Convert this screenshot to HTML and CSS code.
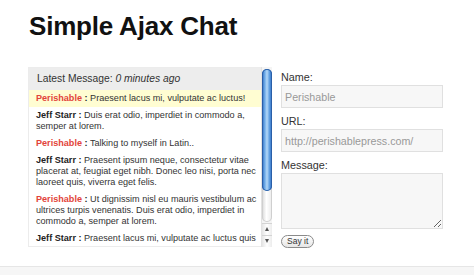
FILE: index.html
```html
<!DOCTYPE html>
<html>
<head>
<meta charset="utf-8">
<title>Simple Ajax Chat</title>
<link rel="stylesheet" href="styles.css">
</head>
<body>
<div class="page">
  <h1 class="title">Simple Ajax Chat</h1>
  <div class="main">
    <div class="chat">
      <div class="log">
        <div class="log-head">Latest Message: <em>0 minutes ago</em></div>
        <ul class="msgs">
          <li class="msg new"><b class="name p">Perishable</b> Praesent lacus mi, vulputate ac luctus!</li>
          <li class="msg"><b class="name">Jeff Starr</b> Duis erat odio, imperdiet in commodo a, semper at lorem.</li>
          <li class="msg"><b class="name p">Perishable</b> Talking to myself in Latin..</li>
          <li class="msg"><b class="name">Jeff Starr</b> Praesent ipsum neque, consectetur vitae placerat at, feugiat eget nibh. Donec leo nisi, porta nec laoreet quis, viverra eget felis.</li>
          <li class="msg"><b class="name p">Perishable</b> Ut dignissim nisl eu mauris vestibulum ac ultrices turpis venenatis. Duis erat odio, imperdiet in commodo a, semper at lorem.</li>
          <li class="msg"><b class="name">Jeff Starr</b> Praesent lacus mi, vulputate ac luctus quis</li>
        </ul>
      </div>
      <div class="scrollbar">
        <div class="track"><div class="thumb"></div></div>
        <div class="arrow up"></div>
        <div class="arrow down"></div>
      </div>
    </div>
    <form class="form">
      <label class="label">Name:</label>
      <input class="field" type="text" value="Perishable">
      <label class="label">URL:</label>
      <input class="field" type="text" value="http://perishablepress.com/">
      <label class="label">Message:</label>
      <textarea class="area"></textarea>
      <button class="btn" type="button">Say it</button>
    </form>
  </div>
</div>
<div class="footer"></div>
</body>
</html>
```
FILE: styles.css
```css
html, body {
  margin: 0;
  padding: 0;
  background: #fff;
}
body {
  font-family: "Liberation Sans", Arial, sans-serif;
  color: #333;
}
.page {
  padding: 11px 0 0 28px;
}
.title {
  margin: 0 0 26px 1px;
  font-size: 26px;
  line-height: 30px;
  font-weight: bold;
  color: #111;
  letter-spacing: -0.2px;
}
.main {
  display: flex;
  align-items: flex-start;
  gap: 9px;
}
.chat {
  display: flex;
  width: 244px;
  height: 180px;
}
.log {
  width: 233px;
  box-sizing: border-box;
  border: 1px solid #ececec;
  border-right: 0;
  overflow: hidden;
  background: #fff;
}
.log-head {
  height: 22px;
  line-height: 22px;
  background: #ededed;
  padding-left: 8px;
  font-size: 10.3px;
  color: #333;
}
.log-head em {
  font-style: italic;
}
.msgs {
  list-style: none;
  margin: 0;
  padding: 0;
}
.msg {
  padding: 3px 2px 3px 7px;
  font-size: 9.1px;
  line-height: 11px;
  color: #333;
}
.name {
  color: #222;
}
.name::after {
  content: " :";
  color: #222;
}
.name.p {
  color: #e2433a;
}
.msg.new {
  background: #fffdd2;
}
.scrollbar {
  width: 11px;
  display: flex;
  flex-direction: column;
  background: #f4f4f4;
  border-left: 1px solid #e2e2e2;
  box-sizing: border-box;
}
.track {
  flex: 1;
  margin: 2px 0 1px 0;
  border-radius: 6px;
  background: linear-gradient(to right, #d8d8d8, #ffffff 45%, #e9e9e9);
  box-shadow: inset 0 0 0 1px #cfcfcf;
}
.thumb {
  height: 122px;
  border-radius: 6px;
  background: linear-gradient(to right, #2a68c0, #74b0ea 30%, #b4d8f8 50%, #64a2e2 72%, #2a68c0);
  box-shadow: inset 0 0 0 1px #2a5fa8;
}
.arrow {
  height: 11px;
  position: relative;
  border-top: 1px solid #d4d4d4;
  background: linear-gradient(to right, #e4e4e4, #ffffff 50%, #ececec);
}
.arrow::after {
  content: "";
  position: absolute;
  left: 3px;
  top: 3px;
  border-left: 2.5px solid transparent;
  border-right: 2.5px solid transparent;
}
.arrow.up::after {
  border-bottom: 4px solid #555;
}
.arrow.down::after {
  border-top: 4px solid #555;
}
.form {
  width: 162px;
  display: flex;
  flex-direction: column;
  align-items: flex-start;
  margin: 0;
  padding-top: 4px;
}
.label {
  display: block;
  font-size: 10.8px;
  line-height: 13px;
  color: #333;
}
.field {
  width: 162px;
  height: 23px;
  box-sizing: border-box;
  margin: 1px 0 7px 0;
  padding: 0 3px;
  border: 1px solid #e0e0e0;
  background: #f7f7f7;
  font-family: "Liberation Sans", Arial, sans-serif;
  font-size: 10.7px;
  color: #999;
  outline: none;
}
.area {
  width: 162px;
  height: 56px;
  box-sizing: border-box;
  margin: 1px 0 6px 0;
  border: 1px solid #e0e0e0;
  background: #f7f7f7;
}
.btn {
  height: 13px;
  padding: 0 5px;
  border: 1px solid #8a8a8a;
  border-radius: 7px;
  background: linear-gradient(#ffffff, #e6e6e6);
  font-family: "Liberation Sans", Arial, sans-serif;
  font-size: 8.5px;
  line-height: 11px;
  color: #333;
}
.footer {
  margin-top: 18px;
  height: 12px;
  border-top: 1px solid #e6e6e6;
  background: #f6f6f6;
}
```
